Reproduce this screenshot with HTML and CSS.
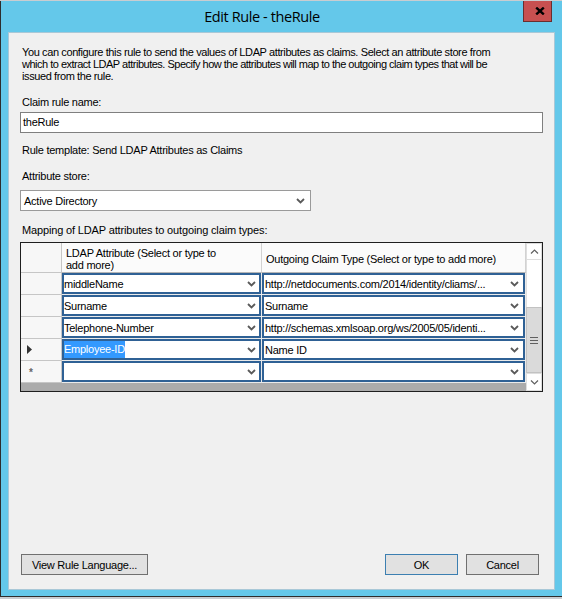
FILE: index.html
```html
<!DOCTYPE html>
<html>
<head>
<meta charset="utf-8">
<title>Edit Rule - theRule</title>
<link rel="stylesheet" href="styles.css">
</head>
<body>
<div class="window">
  <div class="titlebar">
    <div class="title">Edit Rule - theRule</div>
    <div class="close">
      <svg width="10" height="8" viewBox="0 0 10 8"><path d="M1.2 0.6 L8.8 7.4 M8.8 0.6 L1.2 7.4" stroke="#000" stroke-width="2.4" fill="none"/></svg>
    </div>
  </div>
  <div class="content">
    <p class="desc"><span class="d1">You can configure this rule to send the values of LDAP attributes as claims. Select an attribute store from</span><br><span class="d2">which to extract LDAP attributes. Specify how the attributes will map to the outgoing claim types that will be</span><br><span class="d3">issued from the rule.</span></p>
    <div class="label lbl-name">Claim rule name:</div>
    <div class="textbox">theRule</div>
    <div class="label lbl-template">Rule template: Send LDAP Attributes as Claims</div>
    <div class="label lbl-store">Attribute store:</div>
    <div class="combo">
      <span>Active Directory</span>
      <svg class="chev" width="9" height="6" viewBox="0 0 9 6"><path d="M1 1 L4.5 4.5 L8 1" stroke="#5a5a5a" stroke-width="1.8" fill="none"/></svg>
    </div>
    <div class="label lbl-map">Mapping of LDAP attributes to outgoing claim types:</div>
    <div class="grid">
      <div class="grid-main">
        <div class="row head">
          <div class="rh"></div>
          <div class="hc c1">LDAP Attribute (Select or type to<br>add more)</div>
          <div class="hc c2">Outgoing Claim Type (Select or type to add more)</div>
        </div>
        <div class="row">
          <div class="rh"></div>
          <div class="cell c1"><div class="gcombo"><span class="val">middleName</span><svg class="chev" width="9" height="6" viewBox="0 0 9 6"><path d="M1 1 L4.5 4.5 L8 1" stroke="#5a5a5a" stroke-width="1.8" fill="none"/></svg></div></div>
          <div class="cell c2"><div class="gcombo"><span class="val">http://netdocuments.com/2014/identity/cliams/...</span><svg class="chev" width="9" height="6" viewBox="0 0 9 6"><path d="M1 1 L4.5 4.5 L8 1" stroke="#5a5a5a" stroke-width="1.8" fill="none"/></svg></div></div>
        </div>
        <div class="row">
          <div class="rh"></div>
          <div class="cell c1"><div class="gcombo"><span class="val">Surname</span><svg class="chev" width="9" height="6" viewBox="0 0 9 6"><path d="M1 1 L4.5 4.5 L8 1" stroke="#5a5a5a" stroke-width="1.8" fill="none"/></svg></div></div>
          <div class="cell c2"><div class="gcombo"><span class="val">Surname</span><svg class="chev" width="9" height="6" viewBox="0 0 9 6"><path d="M1 1 L4.5 4.5 L8 1" stroke="#5a5a5a" stroke-width="1.8" fill="none"/></svg></div></div>
        </div>
        <div class="row">
          <div class="rh"></div>
          <div class="cell c1"><div class="gcombo"><span class="val">Telephone-Number</span><svg class="chev" width="9" height="6" viewBox="0 0 9 6"><path d="M1 1 L4.5 4.5 L8 1" stroke="#5a5a5a" stroke-width="1.8" fill="none"/></svg></div></div>
          <div class="cell c2"><div class="gcombo"><span class="val">http://schemas.xmlsoap.org/ws/2005/05/identi...</span><svg class="chev" width="9" height="6" viewBox="0 0 9 6"><path d="M1 1 L4.5 4.5 L8 1" stroke="#5a5a5a" stroke-width="1.8" fill="none"/></svg></div></div>
        </div>
        <div class="row">
          <div class="rh current"><svg width="5" height="9" viewBox="0 0 5 9"><path d="M0 0 L5 4.5 L0 9 Z" fill="#333"/></svg></div>
          <div class="cell c1"><div class="gcombo"><span class="val sel">Employee-ID</span><svg class="chev" width="9" height="6" viewBox="0 0 9 6"><path d="M1 1 L4.5 4.5 L8 1" stroke="#5a5a5a" stroke-width="1.8" fill="none"/></svg></div></div>
          <div class="cell c2"><div class="gcombo"><span class="val">Name ID</span><svg class="chev" width="9" height="6" viewBox="0 0 9 6"><path d="M1 1 L4.5 4.5 L8 1" stroke="#5a5a5a" stroke-width="1.8" fill="none"/></svg></div></div>
        </div>
        <div class="row">
          <div class="rh newrow"><span class="star">*</span></div>
          <div class="cell c1"><div class="gcombo"><span class="val"></span><svg class="chev" width="9" height="6" viewBox="0 0 9 6"><path d="M1 1 L4.5 4.5 L8 1" stroke="#5a5a5a" stroke-width="1.8" fill="none"/></svg></div></div>
          <div class="cell c2"><div class="gcombo"><span class="val"></span><svg class="chev" width="9" height="6" viewBox="0 0 9 6"><path d="M1 1 L4.5 4.5 L8 1" stroke="#5a5a5a" stroke-width="1.8" fill="none"/></svg></div></div>
        </div>
        <div class="grid-fill"></div>
      </div>
      <div class="vscroll">
        <div class="sb-btn up"><svg width="9" height="5" viewBox="0 0 9 5"><path d="M1 4.5 L4.5 1 L8 4.5" stroke="#606060" stroke-width="1.2" fill="none"/></svg></div>
        <div class="sb-track"></div>
        <div class="sb-thumb"><svg width="8" height="7" viewBox="0 0 8 7"><path d="M0 0.5 H8 M0 3.5 H8 M0 6.5 H8" stroke="#606060" stroke-width="1"/></svg></div>
        <div class="sb-btn down"><svg width="9" height="5" viewBox="0 0 9 5"><path d="M1 0.5 L4.5 4 L8 0.5" stroke="#606060" stroke-width="1.2" fill="none"/></svg></div>
      </div>
    </div>
    <div class="spacer"></div>
    <div class="buttons">
      <button class="btn view">View Rule Language...</button>
      <button class="btn ok">OK</button>
      <button class="btn cancel">Cancel</button>
    </div>
  </div>
</div>
</body>
</html>
```
FILE: styles.css
```css
html, body {
  margin: 0;
}
body {
  width: 562px;
  height: 599px;
  overflow: hidden;
  padding-top: 1px;
  box-sizing: border-box;
  background: #c9cdd1;
  font-family: "Liberation Sans", Arial, sans-serif;
  font-size: 11px;
  letter-spacing: -0.25px;
  color: #000;
}
.window {
  width: 562px;
  height: 596px;
  box-sizing: border-box;
  background: #64c8ea;
  border-left: 1px solid #2d2d2d;
  border-bottom: 1px solid #2d2d2d;
  padding: 0 7px 6px 7px;
  display: flex;
  flex-direction: column;
}
.titlebar {
  height: 31px;
  flex-shrink: 0;
  display: flex;
  align-items: flex-start;
}
.title {
  flex: 1;
  padding-right: 7px;
  text-align: center;
  font-family: "Open Sans", "Noto Sans", sans-serif;
  font-size: 14.5px;
  letter-spacing: -0.4px;
  line-height: 32px;
  color: #000;
}
.close {
  width: 29px;
  height: 21px;
  box-sizing: border-box;
  margin-right: 3px;
  background: #c75050;
  border: 1px solid #6a2e2e;
  border-top: none;
  display: flex;
  align-items: center;
  justify-content: center;
  padding-left: 5px;
}
.content {
  flex: 1;
  min-height: 0;
  background: #f0f0f0;
  border: 1px solid #a9c8d7;
  padding: 13px 11px 14px 11px;
  display: flex;
  flex-direction: column;
}
.desc {
  margin: 0 0 0 2px;
  line-height: 12px;
  white-space: nowrap;
}
.d1 { letter-spacing: -0.39px; }
.d2 { letter-spacing: -0.5px; }
.d3 { letter-spacing: -0.4px; }
.label {
  padding-left: 2px;
  line-height: 13px;
  white-space: nowrap;
}
.lbl-name { margin-top: 14px; }
.lbl-template { margin-top: 11px; }
.lbl-store { margin-top: 13px; }
.lbl-map { margin-top: 13px; letter-spacing: -0.15px; }
.textbox {
  margin-top: 3px;
  height: 21px;
  box-sizing: border-box;
  border: 1px solid #7f7f7f;
  background: #fff;
  padding-left: 2px;
  line-height: 19px;
}
.combo {
  margin-top: 7px;
  width: 291px;
  height: 21px;
  box-sizing: border-box;
  border: 1px solid #9a9a9a;
  background: #fff;
  display: flex;
  align-items: center;
  justify-content: space-between;
  padding: 0 5px 0 3px;
}
.chev { display: block; flex-shrink: 0; }
.grid {
  margin-top: 5px;
  height: 150px;
  box-sizing: border-box;
  border: 1px solid #1f1f1f;
  background: #fff;
  display: flex;
}
.grid-main {
  width: 505px;
  display: flex;
  flex-direction: column;
}
.row {
  display: flex;
  height: 22px;
  flex-shrink: 0;
}
.row.head { height: 30px; }
.rh {
  width: 41px;
  box-sizing: border-box;
  background: #f7f7f7;
  border-right: 1px solid #c6c6c6;
  border-bottom: 1px solid #c6c6c6;
  display: flex;
  align-items: center;
}
.rh.current { padding-left: 6px; }
.rh.newrow { padding-left: 8px; }
.star {
  font-size: 10px;
  font-weight: bold;
  color: #666;
  line-height: 10px;
  padding-top: 3px;
}
.hc {
  box-sizing: border-box;
  background: #fbfbfb;
  border-right: 1px solid #d2d2d2;
  border-bottom: 1px solid #b5b5b5;
  padding: 2px 0 0 4px;
  display: flex;
  align-items: center;
  line-height: 12px;
  white-space: nowrap;
}
.c1 { width: 200px; }
.c2 { width: 264px; }
.cell {
  box-sizing: border-box;
  padding: 0 1px 1px 0;
  background: #eaeaea;
}
.gcombo {
  height: 21px;
  box-sizing: border-box;
  border: 2px solid #2f6195;
  background: #fff;
  display: flex;
  align-items: center;
  justify-content: space-between;
  padding: 1px 3px 0 0;
  white-space: nowrap;
}
.c2 .gcombo { padding-left: 1px; padding-right: 4px; }
.sel {
  background: #3399ff;
  color: #fff;
  line-height: 17px;
  height: 17px;
  margin-top: -1px;
}
.grid-fill {
  flex: 1;
  background: #ababab;
}
.vscroll {
  width: 16px;
  display: flex;
  flex-direction: column;
  background: #fff;
}
.sb-btn {
  box-sizing: border-box;
  border: 1px solid #dedede;
  display: flex;
  align-items: center;
  justify-content: center;
  background: #fff;
}
.sb-btn.up { height: 17px; }
.sb-btn.down { height: 18px; }
.sb-track {
  height: 47px;
  box-sizing: border-box;
  border-left: 1px solid #dedede;
  border-right: 1px solid #dedede;
}
.sb-thumb {
  height: 66px;
  box-sizing: border-box;
  background: #dadada;
  border: 1px solid #c2c2c2;
  display: flex;
  align-items: center;
  justify-content: center;
}
.spacer { flex: 1; }
.buttons {
  display: flex;
  align-items: center;
  height: 21px;
  flex-shrink: 0;
}
.btn {
  height: 21px;
  box-sizing: border-box;
  background: #e1e1e1;
  border: 1px solid #707070;
  border-radius: 0;
  padding: 0;
  font: inherit;
  letter-spacing: inherit;
  color: #000;
}
.view { width: 127px; margin-left: 1px; }
.ok { width: 73px; margin-left: auto; border-color: #3c7fb1; }
.cancel { width: 73px; margin-left: 8px; margin-right: 4px; }
```
